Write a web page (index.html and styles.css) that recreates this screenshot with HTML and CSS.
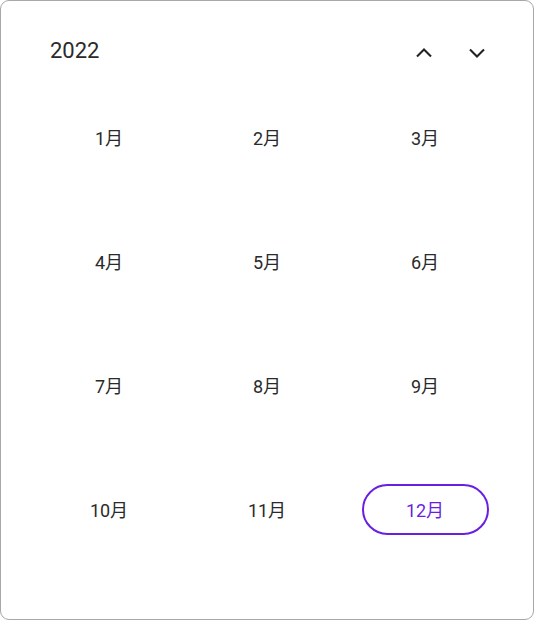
FILE: index.html
```html
<!DOCTYPE html>
<html lang="zh">
<head>
<meta charset="utf-8">
<link rel="stylesheet" href="styles.css">
</head>
<body>
<div class="card">
  <div class="header">
    <span class="year">2022</span>
    <div class="nav">
      <button class="nav-btn" aria-label="previous">
        <svg width="20" height="20" viewBox="0 0 20 20"><path d="M3 13.5 10 6.5l7 7" fill="none" stroke="#222" stroke-width="2.1"/></svg>
      </button>
      <button class="nav-btn" aria-label="next">
        <svg width="20" height="20" viewBox="0 0 20 20"><path d="M3 6.5 10 13.5l7-7" fill="none" stroke="#222" stroke-width="2.1"/></svg>
      </button>
    </div>
  </div>
  <div class="grid">
    <div class="cell"><span class="month">1月</span></div>
    <div class="cell"><span class="month">2月</span></div>
    <div class="cell"><span class="month">3月</span></div>
    <div class="cell"><span class="month">4月</span></div>
    <div class="cell"><span class="month">5月</span></div>
    <div class="cell"><span class="month">6月</span></div>
    <div class="cell"><span class="month">7月</span></div>
    <div class="cell"><span class="month">8月</span></div>
    <div class="cell"><span class="month">9月</span></div>
    <div class="cell"><span class="month">10月</span></div>
    <div class="cell"><span class="month">11月</span></div>
    <div class="cell"><span class="month selected">12月</span></div>
  </div>
</div>
</body>
</html>
```
FILE: styles.css
```css
html, body {
  margin: 0;
  padding: 0;
  background: #fff;
}
body {
  font-family: Roboto, "Noto Sans CJK SC", sans-serif;
  color: #2a2a2a;
}
.card {
  box-sizing: border-box;
  width: 534px;
  height: 620px;
  border: 1px solid #a8a8a8;
  border-radius: 9px;
  padding: 0 29px;
}
.header {
  display: flex;
  align-items: center;
  justify-content: space-between;
  height: 100px;
  padding: 0 0 0 20px;
}
.year {
  font-size: 22px;
  line-height: 26px;
  margin-top: -1px;
}
.nav {
  display: flex;
  gap: 33px;
  margin-right: 17px;
  margin-top: 3px;
}
.nav-btn {
  border: 0;
  background: none;
  padding: 0;
  width: 20px;
  height: 20px;
  display: flex;
}
.grid {
  display: grid;
  grid-template-columns: repeat(3, 1fr);
  grid-auto-rows: 124px;
  margin-top: -26px;
}
.cell {
  display: flex;
  align-items: center;
  justify-content: center;
}
.month {
  box-sizing: border-box;
  width: 127px;
  height: 51px;
  display: flex;
  align-items: center;
  justify-content: center;
  font-size: 18px;
  border-radius: 26px;
  border: 2px solid transparent;
}
.month.selected {
  border-color: #6a1fe0;
  color: #6a1fe0;
}
```
